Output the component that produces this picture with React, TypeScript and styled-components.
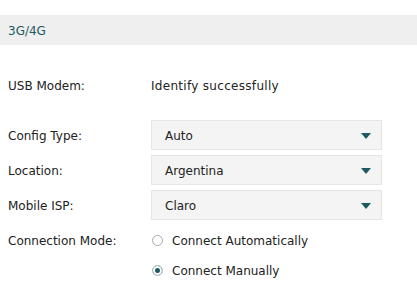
import styled, { createGlobalStyle } from "styled-components";

const Global = createGlobalStyle`
    body {
        margin: 0;
        background: #fff;
        font-family: "DejaVu Sans", Verdana, sans-serif;
        font-size: 12px;
        color: #222;
    }
`

const Page = styled.div`
    padding-top: 15px;
`

const TitleBar = styled.div`
    box-sizing: border-box;
    height: 30px;
    background: #efefef;
    display: flex;
    align-items: center;
    padding: 2px 0 0 8px;
    color: #1d5a5f;
`

const Form = styled.div`
    padding: 25px 0 0 8px;
    display: flex;
    flex-direction: column;
`

const Row = styled.div<{ $gap?: number }>`
    display: grid;
    grid-template-columns: 143px 231px;
    align-items: center;
    height: 30px;
    margin-bottom: ${(p) => p.$gap ?? 5}px;
`

const Label = styled.span`
    padding-top: 2px;
`

const Value = styled.span`
    padding-top: 2px;
    letter-spacing: 0.3px;
`

const Select = styled.div`
    box-sizing: border-box;
    height: 30px;
    background: #f4f4f4;
    border: 1px solid #e6e6e6;
    display: flex;
    align-items: center;
    justify-content: space-between;
    padding: 2px 10px 0 13px;
`

const Arrow = styled.span`
    width: 0;
    height: 0;
    border-left: 5px solid transparent;
    border-right: 5px solid transparent;
    border-top: 6px solid #1d5a5f;
`

const Radio = styled.label`
    display: flex;
    align-items: center;
    gap: 9px;
    padding-top: 1px;
`

const Ball = styled.span<{ $on?: boolean }>`
    box-sizing: border-box;
    width: 11px;
    height: 11px;
    border-radius: 50%;
    border: 1px solid ${(p) => (p.$on ? "#b9c9ca" : "#a9a9a9")};
    background: ${(p) => (p.$on ? "#1d5a5f" : "#fff")};
    box-shadow: ${(p) => (p.$on ? "inset 0 0 0 2px #fff" : "none")};
    margin-left: 1px;
`

const selects = [
    { label: "Config Type:", value: "Auto" },
    { label: "Location:", value: "Argentina" },
    { label: "Mobile ISP:", value: "Claro" },
]

const App = () => {
    return (
        <>
            <Global />
            <Page>
                <TitleBar>3G/4G</TitleBar>
                <Form>
                    <Row $gap={20}>
                        <Label>USB Modem:</Label>
                        <Value>Identify successfully</Value>
                    </Row>
                    {selects.map((s) => (
                        <Row key={s.label}>
                            <Label>{s.label}</Label>
                            <Select>
                                <span>{s.value}</span>
                                <Arrow />
                            </Select>
                        </Row>
                    ))}
                    <Row $gap={0}>
                        <Label>Connection Mode:</Label>
                        <Radio><Ball />Connect Automatically</Radio>
                    </Row>
                    <Row $gap={0}>
                        <Label></Label>
                        <Radio><Ball $on />Connect Manually</Radio>
                    </Row>
                </Form>
            </Page>
        </>
    )
}
export default App
